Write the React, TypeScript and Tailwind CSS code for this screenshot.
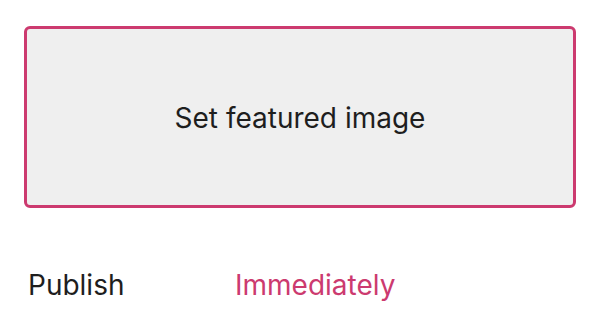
import React from 'react';

export default function App() {
  return (
    <div className="w-[606px] h-[334px] bg-white px-6 pt-[26px]" style={{ fontFamily: 'Inter, "Noto Sans", sans-serif' }}>
      <button className="w-[552px] h-[182px] flex items-center justify-center pt-[2px] bg-[#efefef] border-[3px] border-[#cc3a6f] rounded-[6px] text-[28px] text-[#1e1e1e]">
        Set featured image
      </button>
      <div className="flex items-center mt-[59px] text-[28px] leading-[36px]">
        <span className="w-[211px] pl-1 text-[#1e1e1e]">Publish</span>
        <span className="text-[#cc3a6f]">Immediately</span>
      </div>
    </div>
  );
}
